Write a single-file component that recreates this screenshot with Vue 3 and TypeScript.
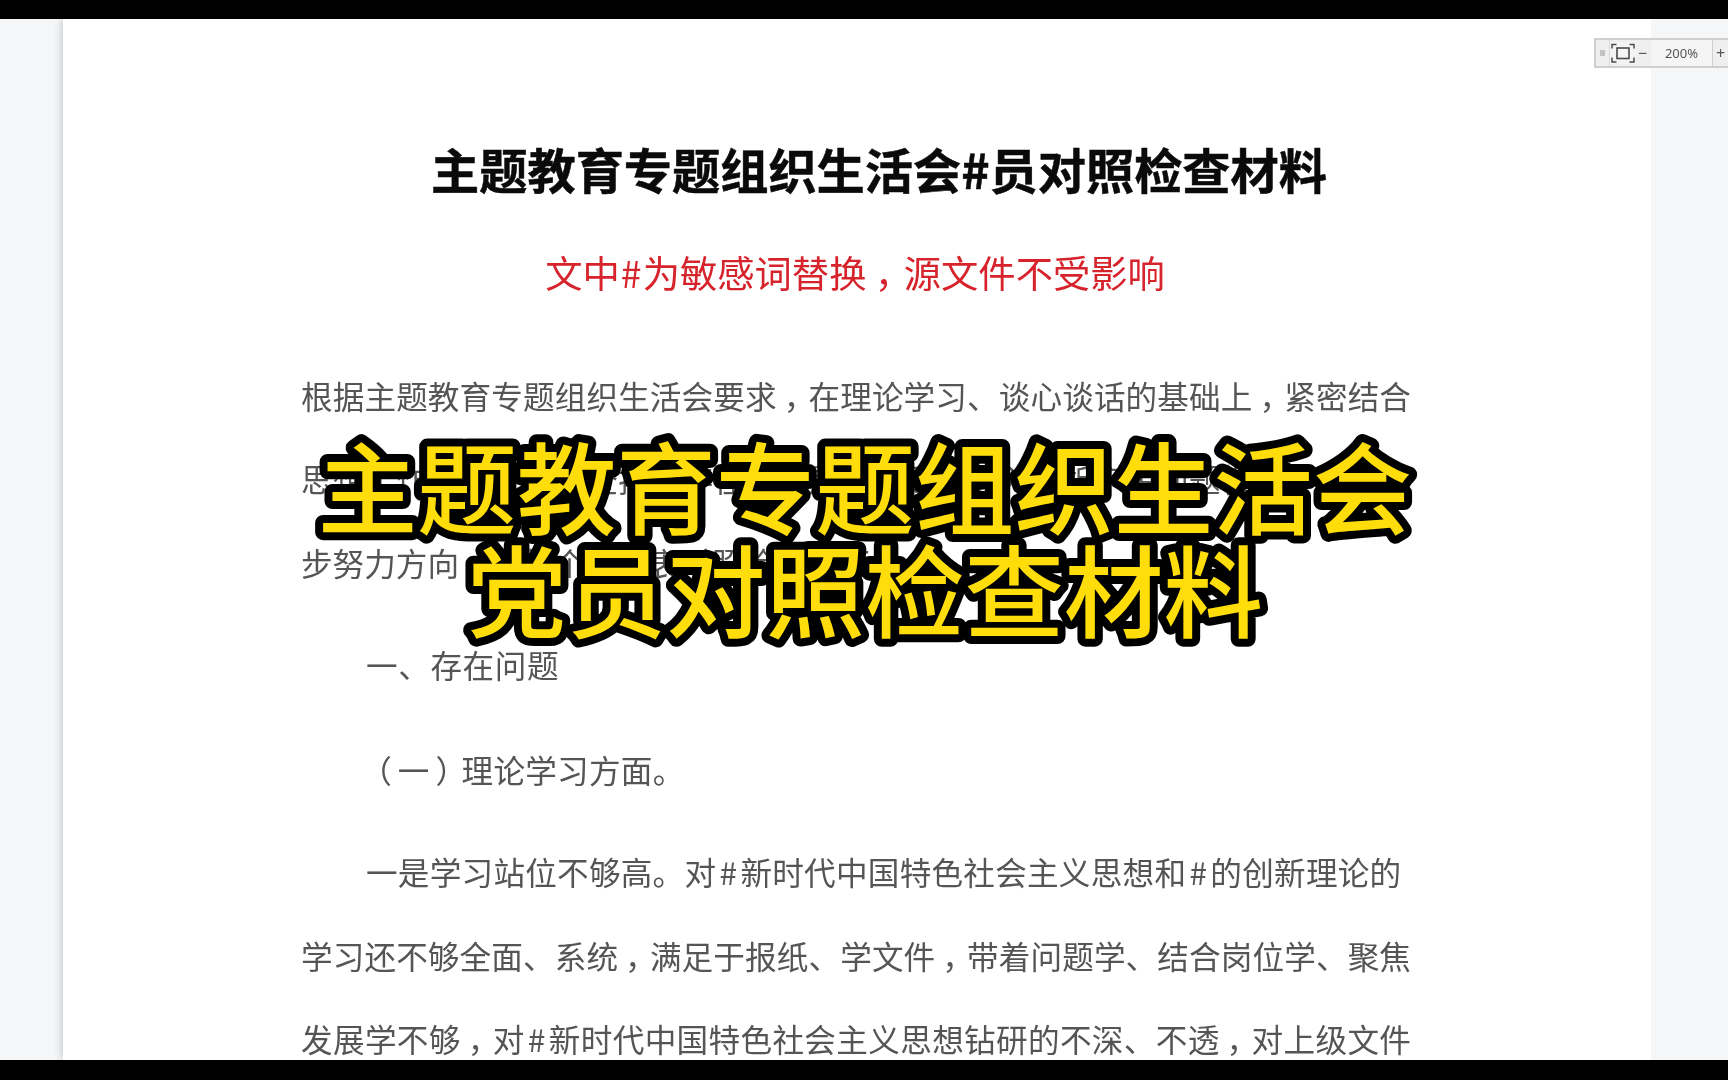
<script setup lang="ts">
interface Seg { text: string; cls: string }
interface Para { segs: Seg[]; cls: string }

const shifted: Record<string, string> = {
  '，': 'comma',
  '（': 'open',
  '）': 'close',
  '#': 'hash',
}

function split(text: string): Seg[] {
  return Array.from(text).reduce<Seg[]>((out, ch) => {
    const cls = shifted[ch] ?? ''
    const last = out[out.length - 1]
    if (!cls && last && !last.cls) last.text += ch
    else out.push({ text: ch, cls })
    return out
  }, [])
}

const rows: [string, string][] = [
  ['根据主题教育专题组织生活会要求，在理论学习、谈心谈话的基础上，紧密结合', 'line fit-row'],
  ['思想工作实际，认真查摆了存在的问题和不足，深入剖析产生问题根源，明确下', 'line fit-row'],
  ['步努力方向，现将个人初衷对照检查如下。', 'line'],
  ['一、存在问题', 'line indent head'],
  ['（一）理论学习方面。', 'line indent sub'],
  ['一是学习站位不够高。对#新时代中国特色社会主义思想和#的创新理论的', 'line indent sub2'],
  ['学习还不够全面、系统，满足于报纸、学文件，带着问题学、结合岗位学、聚焦', 'line fit-row'],
  ['发展学不够，对#新时代中国特色社会主义思想钻研的不深、不透，对上级文件', 'line fit-row'],
]

const paras: Para[] = rows.map(([text, cls]) => ({ segs: split(text), cls }))
const notice: Seg[] = split('文中#为敏感词替换，源文件不受影响')
</script>

<template>
  <div class="screen">
    <div class="bar top"></div>
    <div class="viewer">
      <div class="gutter"></div>
      <main class="page">
        <h1 class="title">主题教育专题组织生活会#员对照检查材料</h1>
        <p class="notice"><span v-for="(s, i) in notice" :key="i" :class="s.cls">{{ s.text }}</span></p>
        <div class="body">
          <p v-for="(p, i) in paras" :key="i" :class="p.cls"><span v-for="(s, j) in p.segs" :key="j" :class="s.cls">{{ s.text }}</span></p>
        </div>
      </main>
      <div class="gutter right"></div>
      <div class="zoombar">
        <span class="grip-cell"><span class="grip"></span></span>
        <svg class="fit" viewBox="0 0 26 22" width="26" height="22" fill="none" stroke="#4a4a4a">
          <rect x="7" y="6" width="12" height="10.5" stroke-width="1.6" />
          <path d="M2 6.5V2.5H6.5M19.5 2.5H24V6.5M2 15.5V20H6.5M19.5 20H24V15.5" stroke-width="1.5" />
        </svg>
        <span class="btn minus">−</span>
        <span class="pct">200%</span>
        <span class="btn plus">+</span>
      </div>
    </div>
    <div class="bar bottom"></div>
    <svg class="caption" viewBox="0 0 1728 1080" width="1728" height="1080">
      <text x="865" y="527">主题教育专题组织生活会</text>
      <text x="865" y="630">党员对照检查材料</text>
    </svg>
  </div>
</template>

<style scoped>
.screen {
  position: relative;
  width: 1728px;
  height: 1080px;
  overflow: hidden;
  display: flex;
  flex-direction: column;
  background: #000;
  font-family: "Noto Sans CJK SC", "Liberation Sans", sans-serif;
}
.bar { background: #000; flex: none; }
.bar.top { height: 19px; }
.bar.bottom { height: 20px; }
.viewer {
  position: relative;
  flex: 1;
  min-height: 0;
  display: flex;
  overflow: hidden;
  background: #f4f6f8;
  filter: blur(0.35px);
}
.gutter { width: 63px; flex: none; background: #f4f6f8; }
.gutter.right { flex: 1; width: auto; }
.page {
  width: 1588px;
  flex: none;
  background: #fff;
  box-shadow: 0 0 9px rgba(0, 0, 0, 0.25);
  overflow: hidden;
}
.title {
  margin: 108.7px 0 0;
  font-size: 48.2px;
  line-height: 80px;
  font-weight: 700;
  color: #0a0a0a;
  -webkit-text-stroke: 0.5px #0a0a0a;
  text-align: center;
  padding-left: 44px;
  white-space: nowrap;
}
.notice {
  margin: 34px 0 0;
  font-size: 37.3px;
  line-height: 60px;
  color: #d7232c;
  text-align: center;
  padding-right: 4px;
  white-space: nowrap;
}
.notice .hash { padding: 0 0.03em; }
.body {
  margin: 52px 0 0 238px;
  width: 1110px;
  color: #555;
  font-size: 31.6px;
  line-height: 83.5px;
  font-weight: 400;
}
.line { margin: 0; white-space: nowrap; }
.fit-row { text-align: justify; text-align-last: justify; white-space: normal; }
.indent { padding-left: 65px; letter-spacing: 0.25px; }
.head { margin-top: 19px; letter-spacing: 0.6px; }
.sub { margin-top: 21px; }
.sub2 { margin-top: 19px; }
.comma { padding-left: 0.22em; margin-right: -0.22em; }
.open { margin-left: -0.18em; margin-right: 0.18em; }
.close { margin-left: 0.18em; margin-right: -0.18em; }
.body .hash { padding: 0 0.1em; }
.zoombar {
  position: absolute;
  top: 19px;
  left: 1594px;
  width: 140px;
  height: 30px;
  box-sizing: border-box;
  display: flex;
  align-items: center;
  background: #efefef;
  border: 2px solid #cfcfcf;
  border-right: 0;
  color: #555;
  font-size: 13px;
  font-family: "Noto Sans", sans-serif;
}
.grip-cell {
  flex: none;
  width: 13px;
  height: 100%;
  display: flex;
  align-items: center;
  justify-content: center;
  border-right: 1px solid #d8d8d8;
}
.grip { width: 5px; height: 6px; background: #c2c2c2; }
.fit { flex: none; background: #f4f4f4; }
.btn { width: 15px; text-align: center; font-size: 16px; line-height: 26px; flex: none; }
.minus { text-align: left; padding-left: 2px; width: 13px; }
.pct { width: 61px; flex: none; text-align: center; background: #f5f5f5; line-height: 26px; }
.plus { border-left: 1px solid #cfcfcf; }
.caption {
  position: absolute;
  left: 0;
  top: 0;
  font-size: 99.5px;
  font-weight: 500;
}
.caption text {
  text-anchor: middle;
  fill: #ffdd0a;
  stroke: #000;
  stroke-width: 16px;
  stroke-linejoin: round;
  paint-order: stroke fill;
}
</style>
